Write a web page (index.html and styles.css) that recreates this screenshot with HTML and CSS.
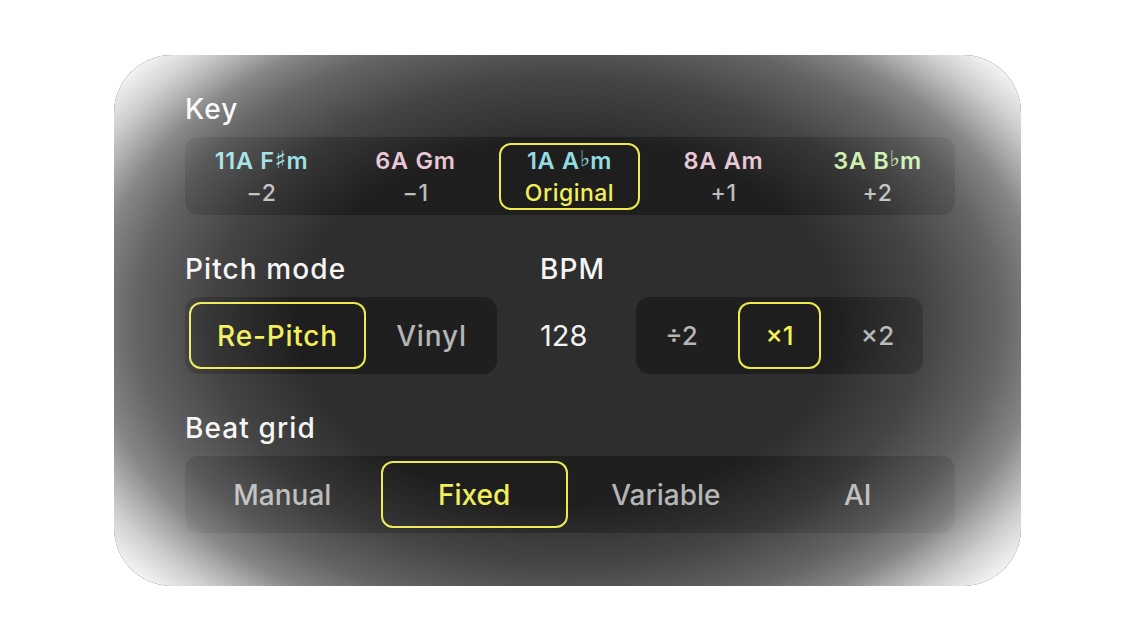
FILE: index.html
```html
<!DOCTYPE html>
<html lang="en">
<head>
<meta charset="utf-8">
<title>Track settings</title>
<link rel="stylesheet" href="styles.css">
</head>
<body>
<div class="stage">
  <div class="card">
    <section class="group">
      <div class="label">Key</div>
      <div class="seg seg-key">
        <div class="key"><span class="k cyan">11A F<span class="acc">♯</span>m</span><span class="d">−2</span></div>
        <div class="key"><span class="k pink">6A Gm</span><span class="d">−1</span></div>
        <div class="key sel"><span class="k cyan">1A A<span class="acc flat">♭</span>m</span><span class="d">Original</span></div>
        <div class="key"><span class="k pink">8A Am</span><span class="d">+1</span></div>
        <div class="key"><span class="k green">3A B<span class="acc flat">♭</span>m</span><span class="d">+2</span></div>
      </div>
    </section>
    <div class="row">
      <section class="group pitch">
        <div class="label">Pitch mode</div>
        <div class="seg seg-pitch">
          <div class="opt sel">Re-Pitch</div>
          <div class="opt">Vinyl</div>
        </div>
      </section>
      <section class="group bpm">
        <div class="label">BPM</div>
        <div class="bpm-row">
          <div class="bpm-val">128</div>
          <div class="seg seg-mult">
            <div class="opt">÷2</div>
            <div class="opt sel">×1</div>
            <div class="opt">×2</div>
          </div>
        </div>
      </section>
    </div>
    <section class="group">
      <div class="label">Beat grid</div>
      <div class="seg seg-grid">
        <div class="opt">Manual</div>
        <div class="opt sel">Fixed</div>
        <div class="opt">Variable</div>
        <div class="opt">AI</div>
      </div>
    </section>
  </div>
</div>
</body>
</html>
```
FILE: styles.css
```css
html, body {
  margin: 0;
  padding: 0;
  background: #ffffff;
}
body {
  font-family: Inter, "Liberation Sans", sans-serif;
  width: 1136px;
  height: 642px;
  overflow: hidden;
}
.stage {
  padding-top: 55px;
  padding-left: 114px;
}
.card {
  position: relative;
  width: 907px;
  height: 531px;
  box-sizing: border-box;
  padding: 36px 66px 53px 71px;
  background: #2e2e2e;
  border-radius: 58px;
  overflow: hidden;
  display: flex;
  flex-direction: column;
  gap: 36px;
}
.card::after {
  content: "";
  position: absolute;
  inset: 0;
  pointer-events: none;
  background: radial-gradient(ellipse 560px 380px at 50% 50%,
    rgba(255,255,255,0) 48%,
    rgba(255,255,255,0.11) 64%,
    rgba(255,255,255,0.26) 77%,
    rgba(255,255,255,0.42) 85%,
    rgba(255,255,255,0.60) 90%,
    rgba(255,255,255,0.77) 95%,
    rgba(255,255,255,0.95) 102%);
}
.group {
  display: flex;
  flex-direction: column;
  gap: 10px;
}
.label {
  font-size: 28px;
  line-height: 36px;
  font-weight: 500;
  letter-spacing: 1.1px;
  color: #f5f5f5;
}
.row {
  display: flex;
  gap: 43px;
}
.pitch {
  width: 312px;
}
.seg {
  background: #1f1f1f;
  border-radius: 14px;
  padding: 5px;
  display: flex;
  box-sizing: border-box;
}
.seg-key {
  width: 770px;
  gap: 13px;
  padding: 6px 6px 5px;
}
.key {
  width: 141px;
  height: 67px;
  box-sizing: border-box;
  border: 2px solid transparent;
  border-radius: 12px;
  display: flex;
  flex-direction: column;
  align-items: center;
  justify-content: center;
  white-space: nowrap;
}
.key .k {
  font-size: 23.5px;
  line-height: 32px;
  font-weight: 600;
  letter-spacing: 0.7px;
}
.key .d {
  font-size: 23px;
  line-height: 32px;
  font-weight: 500;
  letter-spacing: 0.5px;
  color: #bdbdbd;
}
.acc {
  font-family: "DejaVu Sans", sans-serif;
  font-weight: 700;
  font-size: 24px;
  line-height: 1;
  position: relative;
  top: -1px;
  margin: 0;
  letter-spacing: 0;
}
.acc.flat {
  font-size: 22px;
  top: -3px;
}
.cyan { color: #93dde0; }
.pink { color: #e9c6d6; }
.green { color: #c6eea6; }
.sel {
  border: 2px solid #ecea4e !important;
  border-radius: 12px;
  background: #1e1e1e;
}
.key.sel .d { color: #f2ef5a; }
.opt {
  height: 67px;
  box-sizing: border-box;
  border: 2px solid transparent;
  border-radius: 12px;
  display: flex;
  align-items: center;
  justify-content: center;
  font-size: 28px;
  font-weight: 500;
  color: #b4b4b4;
}
.opt.sel { color: #f2ef5a; }
.seg-pitch {
  width: 312px;
  gap: 4px;
  padding: 5px 4px;
}
.seg-pitch .opt {
  padding: 0 24px;
  letter-spacing: 0.8px;
}
.seg-pitch .opt.sel {
  width: 177px;
}
.seg-pitch .opt:last-child {
  flex: 1;
}
.bpm-row {
  display: flex;
  align-items: center;
}
.bpm-val {
  width: 96px;
  font-size: 29px;
  font-weight: 400;
  color: #f2f2f2;
}
.seg-mult {
  width: 287px;
  gap: 15px;
  padding: 5px 4px;
}
.seg-mult .opt {
  width: 83px;
  font-size: 26px;
}
.seg-grid {
  width: 770px;
  gap: 5px;
  padding: 5px 4px;
}
.seg-grid .opt {
  flex: 1;
}
```
